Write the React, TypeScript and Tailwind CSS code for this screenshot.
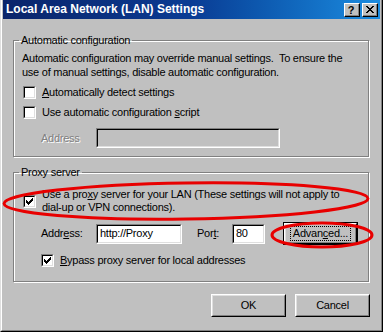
import type { ReactNode } from 'react'

const font = { fontFamily: '"Liberation Sans", Arial, sans-serif' }

function CheckBox({ checked = false }: { checked?: boolean }) {
  return (
    <span className="flex w-[13px] h-[13px] shrink-0 border border-t-[#808080] border-l-[#808080] border-r-white border-b-white">
      <span className="flex flex-1 items-center justify-center border border-t-black border-l-black border-r-[#dfdfdf] border-b-[#dfdfdf] bg-white">
        {checked && (
          <svg width="7" height="7" viewBox="0 0 7 7" shapeRendering="crispEdges">
            <path d="M0 2h1v3H0zM1 3h1v3H1zM2 4h1v3H2zM3 3h1v3H3zM4 2h1v3H4zM5 1h1v3H5zM6 0h1v3H6z" fill="#000" />
          </svg>
        )}
      </span>
    </span>
  )
}

function TextBox({ value = '', width, disabled = false }: { value?: string; width: string; disabled?: boolean }) {
  return (
    <div className={`flex h-[20px] shrink-0 border border-t-[#808080] border-l-[#808080] border-r-white border-b-white ${width}`}>
      <div
        className={`flex flex-1 items-center pl-[2px] border border-t-black border-l-black border-r-[#dfdfdf] border-b-[#dfdfdf] ${disabled ? 'bg-[#c0c0c0]' : 'bg-white'}`}
      >
        {value}
      </div>
    </div>
  )
}

function Button({ children, isDefault = false }: { children: ReactNode; isDefault?: boolean }) {
  if (isDefault) {
    return (
      <div className="flex w-[75px] h-[23px] shrink-0 border border-black">
        <div className="flex flex-1 border border-t-white border-l-white border-r-black border-b-black">
          <div className="flex flex-1 items-center justify-center border border-t-[#dfdfdf] border-l-[#dfdfdf] border-r-[#808080] border-b-[#808080]">
            <span className="outline outline-1 outline-dotted outline-black px-[2px] leading-[13px]">{children}</span>
          </div>
        </div>
      </div>
    )
  }
  return (
    <div className="flex w-[75px] h-[23px] shrink-0 border border-t-white border-l-white border-r-black border-b-black">
      <div className="flex flex-1 items-center justify-center border border-t-[#dfdfdf] border-l-[#dfdfdf] border-r-[#808080] border-b-[#808080]">
        {children}
      </div>
    </div>
  )
}

function TitleButton({ children }: { children: ReactNode }) {
  return (
    <div className="flex w-[16px] h-[14px] border border-t-white border-l-white border-r-black border-b-black bg-[#c0c0c0]">
      <div className="flex flex-1 items-center justify-center border-r border-b border-r-[#808080] border-b-[#808080]">
        {children}
      </div>
    </div>
  )
}

export default function App() {
  return (
    <div
      style={font}
      className="relative w-[383px] h-[332px] bg-[#c0c0c0] text-[11px] leading-[13px] tracking-[-0.25px] text-black border-l border-r border-b border-l-[#dfdfdf] border-r-black border-b-black"
    >
      <div className="flex flex-col h-full border-l border-r border-b border-l-white border-r-[#808080] border-b-[#808080] px-px pb-px">
        {/* Title bar */}
        <div className="flex items-center h-[19px] shrink-0 pl-[3px] pr-[2px] bg-gradient-to-r from-[#0a246a] via-[#0a3c94] to-[#1c8ce0]">
          <span className="text-white font-bold text-[12px] tracking-normal">Local Area Network (LAN) Settings</span>
          <div className="ml-auto flex gap-[2px] mt-[1px]">
            <TitleButton>
              <span className="font-bold text-[11px] leading-[10px] pr-px">?</span>
            </TitleButton>
            <TitleButton>
              <svg width="8" height="7" viewBox="0 0 8 7" shapeRendering="crispEdges">
                <path d="M0 0h2v1H0zM1 1h2v1H1zM2 2h4v1H2zM3 3h2v1H3zM2 4h4v1H2zM1 5h2v1H1zM0 6h2v1H0zM6 0h2v1H6zM5 1h2v1H5zM5 5h2v1H5zM6 6h2v1H6z" fill="#000" />
              </svg>
            </TitleButton>
          </div>
        </div>

        <div className="flex flex-col pl-[10px] pt-[15px]">
          {/* Automatic configuration */}
          <fieldset className="w-[356px] border border-[#808080] shadow-[inset_1px_1px_0_#fff,1px_1px_0_#fff] pl-[8px] pt-[4px] pb-[8px]">
            <legend className="ml-[-3px] px-[2px]">Automatic configuration</legend>
            <p className="leading-[14px]">
              Automatic configuration may override manual settings.&nbsp; To ensure the
              <br />
              use of manual settings, disable automatic configuration.
            </p>
            <div className="flex items-center gap-[6px] mt-[7px] pl-px">
              <CheckBox />
              <span>
                <span className="underline">A</span>utomatically detect settings
              </span>
            </div>
            <div className="flex items-center gap-[6px] mt-[7px] pl-px">
              <CheckBox />
              <span>
                Use automatic configuration <span className="underline">s</span>cript
              </span>
            </div>
            <div className="flex items-center mt-[9px] pl-[19px]">
              <span className="w-[55px] text-[#808080] [text-shadow:1px_1px_0_#fff]">Address</span>
              <TextBox width="w-[184px]" disabled />
            </div>
          </fieldset>

          {/* Proxy server */}
          <fieldset className="w-[356px] mt-[9px] border border-[#808080] shadow-[inset_1px_1px_0_#fff,1px_1px_0_#fff] pl-[8px] pt-[9px] pb-[14px]">
            <legend className="ml-[-3px] px-[2px]">Proxy server</legend>
            <div className="flex items-center gap-[6px] pl-px">
              <CheckBox checked />
              <span className="leading-[13px]">
                Use a pro<span className="underline">x</span>y server for your LAN (These settings will not apply to
                <br />
                dial-up or VPN connections).
              </span>
            </div>
            <div className="flex items-center mt-[8px] pl-[19px]">
              <span className="w-[55px]">
                Addr<span className="underline">e</span>ss:
              </span>
              <TextBox width="w-[86px]" value="http://Proxy" />
              <span className="ml-[15px] w-[35px]">
                Por<span className="underline">t</span>:
              </span>
              <TextBox width="w-[33px]" value="80" />
              <div className="ml-[18px]">
                <Button isDefault>
                  Advan<span className="underline">c</span>ed...
                </Button>
              </div>
            </div>
            <div className="flex items-center gap-[6px] mt-[9px] pl-[19px]">
              <CheckBox checked />
              <span>
                <span className="underline">B</span>ypass proxy server for local addresses
              </span>
            </div>
          </fieldset>

          {/* Dialog buttons */}
          <div className="flex gap-[9px] mt-[12px] pl-[198px]">
            <Button>OK</Button>
            <Button>Cancel</Button>
          </div>
        </div>
      </div>

      {/* red annotation marks */}
      <svg className="absolute left-0 top-0 pointer-events-none" width="383" height="332" viewBox="0 0 383 332">
        <ellipse cx="185" cy="201" rx="182" ry="18" transform="rotate(-0.8 185 201)" fill="none" stroke="#e80000" strokeWidth="3" />
        <ellipse cx="321" cy="235" rx="50" ry="12" fill="none" stroke="#e80000" strokeWidth="3" />
      </svg>
    </div>
  )
}
